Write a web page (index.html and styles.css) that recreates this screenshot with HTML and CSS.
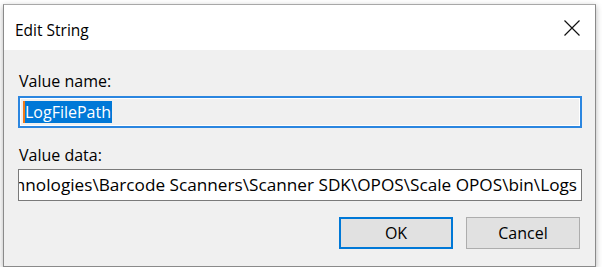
FILE: index.html
```html
<!DOCTYPE html>
<html>

<head>
  <title>Edit String</title>
  <link rel="stylesheet" href="styles.css">
</head>

<body>
  <div class="dialog">
    <div class="title-bar">
      <p class="title">Edit String</p>
      <svg class="close-icon" width="16" height="16" viewBox="0 0 16 16">
        <path d="M0.5 0.5 L15.5 15.5 M15.5 0.5 L0.5 15.5" stroke="#111" stroke-width="1.2" fill="none" />
      </svg>
    </div>
    <div class="content">
      <p class="label">Value name:</p>
      <div class="field name-field">
        <span class="caret"></span><span class="selected">LogFilePath</span>
      </div>
      <p class="label data-label">Value data:</p>
      <div class="field data-field">
        <span class="field-text">C:\Program Files\Zebra Technologies\Barcode Scanners\Scanner SDK\OPOS\Scale OPOS\bin\Logs</span>
      </div>
      <div class="buttons">
        <button class="btn btn-ok">OK</button>
        <button class="btn">Cancel</button>
      </div>
    </div>
  </div>
</body>

</html>
```

FILE: styles.css
```css
body {
  margin: 0;
  background-color: white;
  font-family: "Open Sans", "Noto Sans", sans-serif;
  font-size: 16px;
  line-height: 20px;
  color: black;
}

p {
  margin: 0;
}

.dialog {
  margin: 4px 0 0 3px;
  width: 593px;
  height: 263px;
  box-sizing: border-box;
  border: 1px solid #8a8a8a;
  border-top-color: #a8a8a8;
  box-shadow: 0 2px 6px rgba(0, 0, 0, 0.3);
  background-color: #f0f0f0;
}

.title-bar {
  display: flex;
  justify-content: space-between;
  align-items: flex-start;
  height: 45px;
  box-sizing: border-box;
  padding: 15px 15px 0 11px;
  background-color: white;
}

.title {
  font-size: 15.5px;
}

.content {
  padding: 21px 13px 0 14px;
}

.label {
  margin-left: 1px;
}

.data-label {
  margin-top: 17px;
}

.field {
  display: flex;
  align-items: center;
  height: 32px;
  box-sizing: border-box;
  overflow: hidden;
  white-space: nowrap;
}

.name-field {
  margin-top: 5px;
  border: 2px solid #2b86e0;
  box-shadow: inset 0 0 0 1px white;
  padding-left: 3px;
}

.caret {
  width: 2px;
  height: 22px;
  background-color: #f07a1a;
}

.selected {
  line-height: 22px;
  background-color: #0078d7;
  color: white;
  padding-right: 1px;
}

.data-field {
  margin-top: 4px;
  border: 1px solid #7a7a7a;
  background-color: white;
  justify-content: flex-end;
  padding-right: 4px;
  font-size: 17.2px;
}

.field-text {
  flex-shrink: 0;
}

.buttons {
  display: flex;
  justify-content: flex-end;
  gap: 13px;
  margin-top: 16px;
  margin-right: 2px;
}

.btn {
  width: 114px;
  height: 32px;
  background-color: #e1e1e1;
  border: 1px solid #adadad;
  font-family: "Open Sans", "Noto Sans", sans-serif;
  font-size: 16px;
  color: black;
  padding: 0;
}

.btn-ok {
  border: 2px solid #0078d7;
}
```
